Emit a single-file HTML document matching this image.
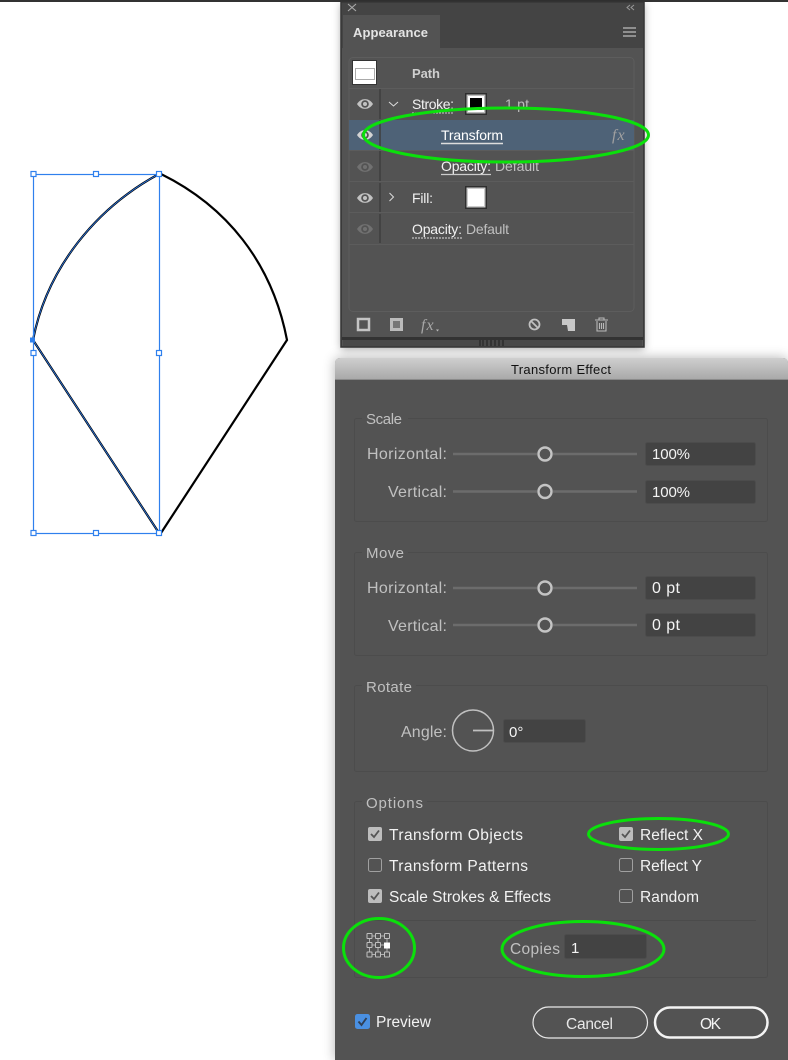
<!DOCTYPE html>
<html><head><meta charset="utf-8"><style>
html,body{margin:0;padding:0;background:#fff;width:788px;height:1060px;overflow:hidden}
svg{position:absolute;left:0;top:0;display:block}
.p{position:absolute}
text{font-family:"Liberation Sans",sans-serif;font-size:14px;fill:#c9c9c9}
.w{fill:#f2f2f2}.h{fill:#c0c0c0}
.d{font-size:15.500px}
.g{font-size:15px}
.v{fill:#f4f4f4;font-size:15px}
.t{fill:#f4f4f4;font-size:16px}
</style></head><body>
<div class="p" style="left:0;top:0;width:788px;height:1.5px;background:#333"></div>
<div class="p" style="left:341px;top:2px;width:303px;height:345px;background:#535353;box-shadow:0 2px 8px rgba(0,0,0,.35)"></div>
<div class="p" style="left:335px;top:358px;width:453px;height:702px;background:#535353;border-radius:5px 5px 0 0;box-shadow:0 0 12px rgba(0,0,0,.3)"></div>
<svg width="788" height="1060" viewBox="0 0 788 1060">
<defs>
<linearGradient id="tb" x1="0" y1="0" x2="0" y2="1"><stop offset="0" stop-color="#cfcfcf"/><stop offset="1" stop-color="#a9a9a9"/></linearGradient>
<g id="eye"><path d="M-8 0C-4-6.500 4-6.500 8 0C4 6.500-4 6.500-8 0Z" fill="currentColor"/><circle r="3.800" fill="#535353"/><circle r="2" fill="currentColor"/></g>
<g id="sl"><path d="M453 0H537M553 0H637" stroke="#6c6c6c" stroke-width="2.500" fill="none"/><circle cx="545" r="6.500" fill="none" stroke="#c4c4c4" stroke-width="2.400"/></g>
<g id="gc"><rect width="5" height="5" rx=".5" fill="#535353" stroke="#c0c0c0"/></g>
</defs>

<!-- artwork -->
<g fill="none">
<path d="M33 340C47 268 96 208 159 174" stroke="#000" stroke-width="2.200"/>
<path d="M33 340L159 533" stroke="#000" stroke-width="2.200"/>
<path d="M161 174C226 206 272 262 287 340L161 533" stroke="#000" stroke-width="2.200"/>
<path d="M33 340C47 268 96 208 159 174M33 340L159 533" stroke="#2c7df0" stroke-width=".8"/>
<rect x="33.500" y="174.500" width="126" height="359" stroke="#2f80ed" stroke-width="1.200"/>
<g fill="#fff" stroke="#2f80ed" stroke-width="1.200">
<rect x="31" y="171.500" width="5" height="5"/><rect x="93.500" y="171.500" width="5" height="5"/><rect x="156.500" y="171.500" width="5" height="5"/>
<rect x="31" y="350.500" width="5" height="5"/><rect x="156.500" y="350.500" width="5" height="5"/>
<rect x="31" y="530.500" width="5" height="5"/><rect x="93.500" y="530.500" width="5" height="5"/><rect x="156.500" y="530.500" width="5" height="5"/>
</g>
<rect x="30" y="337.500" width="5" height="5" fill="#2f80ed"/>
</g>

<!-- panel -->
<rect x="341" y="2" width="303" height="345" fill="none" stroke="#333" stroke-width="1.500"/>
<rect x="342" y="3" width="301" height="45" fill="#444"/>
<rect x="343" y="15" width="97" height="34" fill="#535353"/>
<path d="M348 4L356 11M356 4L348 11" stroke="#aaa" stroke-width="1.100"/>
<path d="M630 5L627 7.500L630 10M634 5L631 7.500L634 10" stroke="#999" fill="none"/>
<path d="M623 28H636M623 32H636M623 36H636" stroke="#a8a8a8" stroke-width="1.500"/>
<text x="353" y="37" textLength="75" style="font-weight:bold;fill:#e4e4e4;font-size:13px">Appearance</text>
<rect x="349" y="57.500" width="285" height="254" rx="4" fill="none" stroke="#5d5d5d"/>
<path d="M349 88.500H634M349 150.500H634M349 181.500H634M349 212.500H634M349 244.500H634" stroke="#5c5c5c"/>
<rect x="349" y="120" width="285" height="30" fill="#4e6277"/>
<path d="M380 89V119M380 120V150M380 151V181M380 183V212M380 214V243" stroke="#3e3e3e" stroke-width="1.500"/>
<rect x="352.500" y="60.500" width="24" height="24" fill="#fff" stroke="#333"/>
<rect x="355.500" y="68.500" width="19" height="11" fill="#fff" stroke="#aaa"/>
<g color="#c2c2c2"><use href="#eye" x="365" y="104"/><use href="#eye" x="365" y="198"/></g>
<g color="#d4d4d4"><use href="#eye" x="365" y="135"/></g>
<g color="#717171"><use href="#eye" x="365" y="167"/><use href="#eye" x="365" y="229"/></g>
<path d="M389 102L393.500 106L398 102" stroke="#ddd" fill="none"/>
<path d="M389.500 193L393.500 197L389.500 201" stroke="#ddd" fill="none"/>
<text x="412" y="78" textLength="28" style="font-weight:bold;font-size:13px;fill:#cfcfcf">Path</text>
<text x="412" y="109" textLength="42" class="w">Stroke:</text>
<path d="M412 113H454" stroke="#ccc" stroke-dasharray="2 1"/>
<rect x="465" y="93" width="22" height="22" fill="#2e2e2e"/><rect x="466.500" y="94.500" width="19" height="19" fill="#bbb"/><rect x="468" y="96" width="16" height="16" fill="#fff"/><rect x="470" y="98" width="12" height="12" fill="#000"/>
<text x="505" y="109" textLength="24" style="fill:#bdbdbd">1 pt</text>
<text x="441" y="140" textLength="62" style="fill:#fff">Transform</text>
<path d="M441 143.500H503" stroke="#ddd" stroke-width="1.500"/>
<text x="612" y="140" style="font-family:'Liberation Serif',serif;font-style:italic;font-size:16px;fill:#a0a0a0;letter-spacing:1px">fx</text>
<text x="441" y="171" textLength="50" class="w">Opacity:</text>
<path d="M441 174.500H491" stroke="#ccc" stroke-width="1.200"/>
<text x="495" y="171" textLength="44" class="h">Default</text>
<text x="412" y="203" textLength="21" class="w">Fill:</text>
<rect x="465" y="186" width="22" height="23" fill="#2e2e2e"/><rect x="466.500" y="187.500" width="19" height="20" fill="#ccc"/><rect x="468" y="189" width="16" height="17" fill="#fff"/>
<text x="412" y="234" textLength="50" class="w">Opacity:</text>
<path d="M412 238H462" stroke="#ddd" stroke-dasharray="2 1"/>
<text x="466" y="234" textLength="43" class="h">Default</text>
<rect x="358" y="319" width="11" height="11" fill="none" stroke="#c4c4c4" stroke-width="2.500"/>
<rect x="390.500" y="318.500" width="12" height="12" fill="#bbb" stroke="#bbb"/><rect x="393" y="321" width="7" height="7" fill="#777"/>
<text x="421" y="330" style="font-family:'Liberation Serif',serif;font-style:italic;font-size:16px;fill:#a8a8a8;letter-spacing:1px">fx</text>
<path d="M436 329.500H439L437.500 331.500Z" fill="#bbb"/>
<circle cx="534.500" cy="324.500" r="5" fill="none" stroke="#c0c0c0" stroke-width="1.800"/><path d="M531 321L538 328" stroke="#c0c0c0" stroke-width="1.800"/>
<path d="M562 319H575V331H568L567 325H562Z" fill="#c8c8c8"/>
<path d="M597 321V331H606V321M595 320H608M599 320V318H604V320M599.500 323V329M601.500 323V329M603.500 323V329" fill="none" stroke="#b8b8b8" stroke-width="1.100"/>
<rect x="342" y="337" width="301" height="3" fill="#333"/>
<rect x="343" y="340" width="299" height="6" fill="#484848"/>
<path d="M480 340V346M483 340V346M487 340V346M491 340V346M495 340V346M499 340V346M503 340V346" stroke="#2c2c2c" stroke-width="1.500"/>

<!-- dialog -->
<path d="M335 379V363Q335 358 340 358H783Q788 358 788 363V379Z" fill="url(#tb)"/>
<rect x="335" y="379" width="453" height="1" fill="#8a8a8a"/>
<text x="511" y="374" textLength="100" style="fill:#111;font-size:13px">Transform Effect</text>

<g fill="none" stroke="#4c4c4c">
<rect x="354.500" y="418.500" width="413" height="103" rx="2"/>
<rect x="354.500" y="552.500" width="413" height="103" rx="2"/>
<rect x="354.500" y="685.500" width="413" height="86" rx="2"/>
<rect x="354.500" y="801.500" width="413" height="176" rx="2"/>
</g>
<rect x="362" y="410" width="46" height="16" fill="#535353"/><rect x="362" y="544" width="46" height="16" fill="#535353"/><rect x="362" y="678" width="54" height="16" fill="#535353"/><rect x="362" y="794" width="65" height="16" fill="#535353"/>
<text x="366" y="424" textLength="36" class="h g">Scale</text>
<text x="366" y="558" textLength="38" class="h g">Move</text>
<text x="366" y="692" textLength="46" class="h g">Rotate</text>
<text x="366" y="808" textLength="57" class="h g">Options</text>

<text x="367" y="459" textLength="80" class="h" style="font-size:16px">Horizontal:</text>
<text x="388" y="497" textLength="59" class="h" style="font-size:16px">Vertical:</text>
<text x="367" y="593" textLength="80" class="h" style="font-size:16px">Horizontal:</text>
<text x="388" y="631" textLength="59" class="h" style="font-size:16px">Vertical:</text>
<use href="#sl" y="454"/><use href="#sl" y="491.500"/><use href="#sl" y="588"/><use href="#sl" y="625"/>
<g fill="#434343" stroke="#4c4c4c">
<rect x="645.500" y="442.500" width="110" height="23" rx="2"/>
<rect x="645.500" y="480.500" width="110" height="23" rx="2"/>
<rect x="645.500" y="576.500" width="110" height="23" rx="2"/>
<rect x="645.500" y="613.500" width="110" height="23" rx="2"/>
<rect x="503.500" y="719.500" width="82" height="23" rx="2"/>
<rect x="564.500" y="934.500" width="82" height="24" rx="2"/>
</g>
<text x="652" y="459" textLength="38" class="v">100%</text>
<text x="652" y="497" textLength="38" class="v">100%</text>
<text x="652" y="593" textLength="28" class="t">0 pt</text>
<text x="652" y="630" textLength="28" class="t">0 pt</text>
<text x="509" y="737" class="v">0°</text>
<text x="571" y="953" class="v">1</text>

<text x="401" y="737" textLength="46" class="h" style="font-size:16px">Angle:</text>
<circle cx="473" cy="730.500" r="20.500" fill="none" stroke="#c0c0c0" stroke-width="1.500"/>
<path d="M473 730.500H494" stroke="#c0c0c0" stroke-width="1.800"/>

<g fill="#bdbdbd">
<rect x="368" y="827" width="14" height="14" rx="2"/><rect x="619" y="827" width="14" height="14" rx="2"/><rect x="368" y="889" width="14" height="14" rx="2"/>
</g>
<path d="M371 834L374 837L379 830.500M622 834L625 837L630 830.500M371 896L374 899L379 892.500" stroke="#555" stroke-width="1.800" fill="none"/>
<g fill="none" stroke="#a0a0a0">
<rect x="368.500" y="858.500" width="13" height="13" rx="2"/><rect x="619.500" y="858.500" width="13" height="13" rx="2"/><rect x="619.500" y="889.500" width="13" height="13" rx="2"/>
</g>
<text x="389" y="840" textLength="134" class="w d">Transform Objects</text>
<text x="389" y="871" textLength="139" class="w d">Transform Patterns</text>
<text x="389" y="902" textLength="162" class="w d">Scale Strokes &amp; Effects</text>
<text x="640" y="840" textLength="63" class="w d">Reflect X</text>
<text x="640" y="871" textLength="62" class="w d">Reflect Y</text>
<text x="640" y="902" textLength="59" class="w d">Random</text>
<path d="M365 920.500H756" stroke="#4b4b4b"/>

<path d="M367 936H390M367 945H390M367 954.500H390M369.500 934V957M378 934V957M387 934V957" stroke="#b0b0b0" fill="none"/>
<use href="#gc" x="367" y="933.500"/><use href="#gc" x="375.500" y="933.500"/><use href="#gc" x="384.500" y="933.500"/>
<use href="#gc" x="367" y="942.500"/><use href="#gc" x="375.500" y="942.500"/>
<rect x="384" y="942.500" width="6" height="6" fill="#fff"/>
<use href="#gc" x="367" y="952"/><use href="#gc" x="375.500" y="952"/><use href="#gc" x="384.500" y="952"/>
<text x="510" y="954" textLength="50" class="h d">Copies</text>

<rect x="355" y="1014" width="15" height="15" rx="2.500" fill="#4a90e2"/>
<path d="M358.500 1021.500L361.500 1025L366.500 1018" stroke="#2f3f55" stroke-width="1.900" fill="none"/>
<text x="376" y="1027" textLength="55" class="w d">Preview</text>
<rect x="533" y="1007" width="114.500" height="31" rx="15.500" fill="none" stroke="#e8e8e8" stroke-width="1.200"/>
<rect x="655" y="1007.500" width="112.500" height="30" rx="15" fill="none" stroke="#f4f4f4" stroke-width="2.500"/>
<text x="566" y="1029" textLength="47" class="d" style="fill:#e8e8e8">Cancel</text>
<text x="700" y="1029" textLength="21" class="d" style="fill:#f4f4f4">OK</text>

<!-- green annotations -->
<g fill="none" stroke="#0be00b" stroke-width="3">
<ellipse cx="506" cy="135" rx="142.500" ry="27"/>
<ellipse cx="658.500" cy="834" rx="70" ry="15.500"/>
<ellipse cx="379" cy="948" rx="35.500" ry="29.500"/>
<ellipse cx="583" cy="949" rx="81" ry="27.500"/>
</g>
</svg>
</body></html>
